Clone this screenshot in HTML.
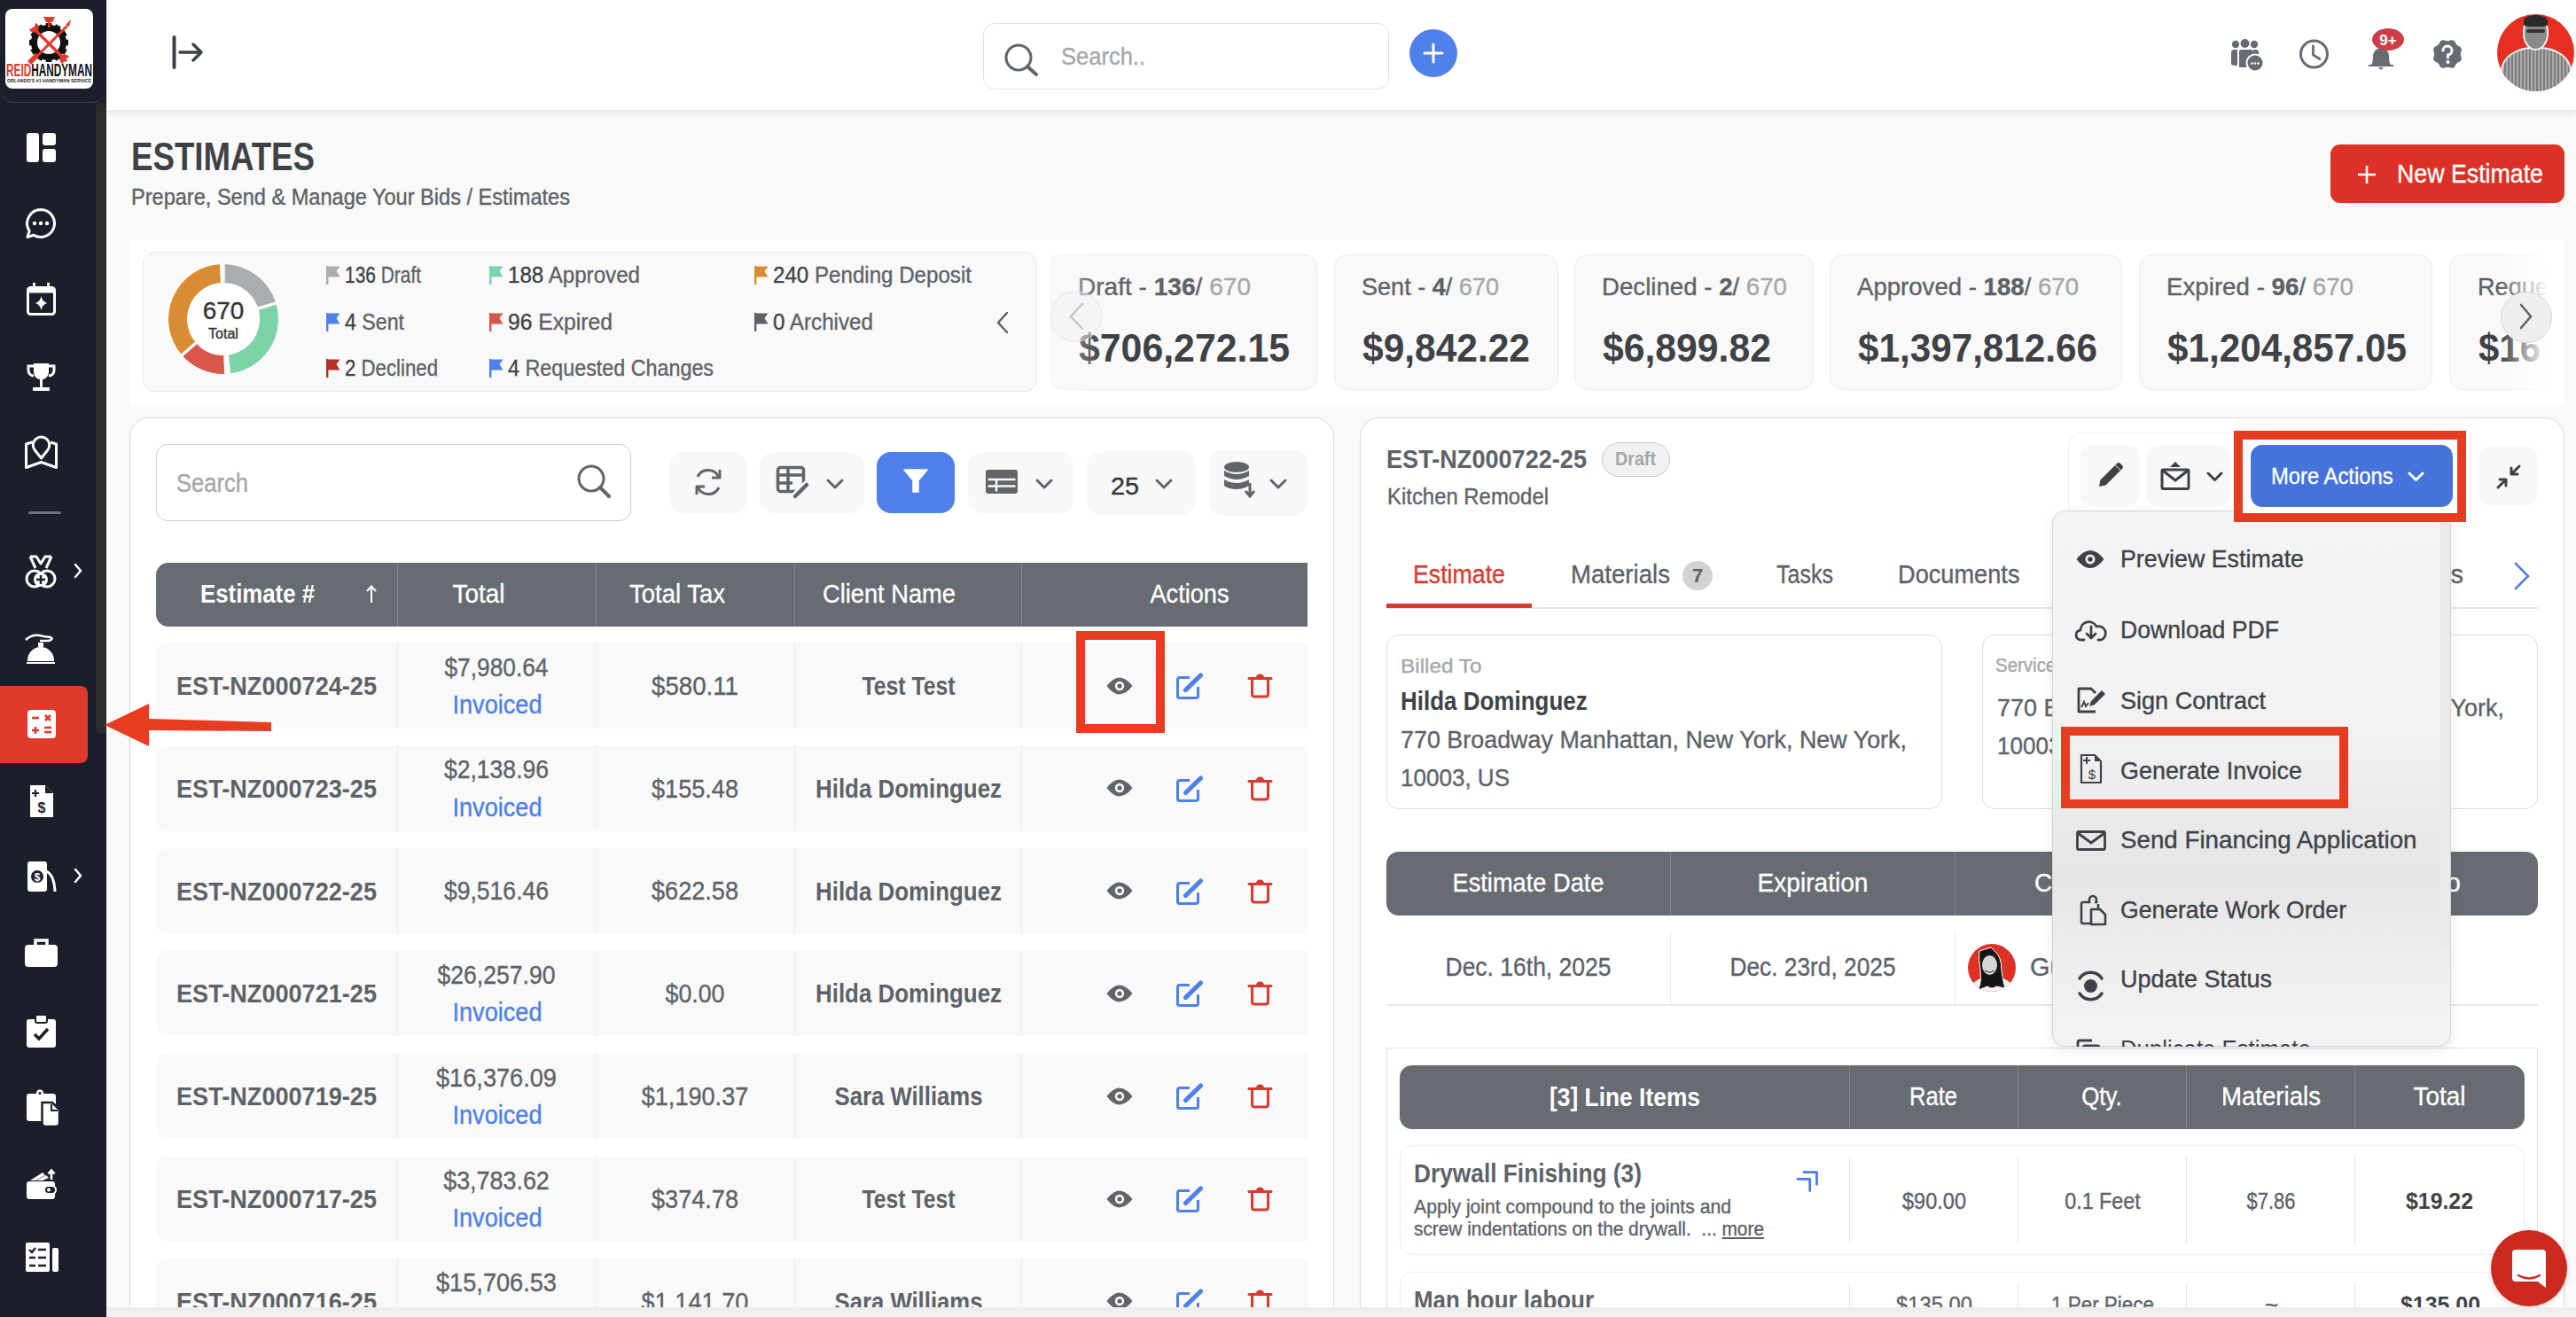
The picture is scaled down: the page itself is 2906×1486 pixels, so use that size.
<!DOCTYPE html>
<html><head><meta charset="utf-8"><style>*{box-sizing:border-box;margin:0;padding:0}
html,body{width:2906px;height:1486px;overflow:hidden;background:#f9f9f9;font-family:"Liberation Sans",sans-serif;color:#4a4f55}
.a{position:absolute}
.t{position:absolute;white-space:pre;display:block}
svg{position:absolute;overflow:visible}
</style></head><body>
<div class="a" style="left:0px;top:0px;width:120px;height:1486px;background:#1b1f2b"></div>
<div class="a" style="left:0px;top:0px;width:120px;height:116px;border-bottom:1.5px solid #3b4048;border-radius:0 0 16px 16px"></div>
<div class="a" style="left:108px;top:116px;width:12px;height:712px;background:#2c2c2c;border-radius:6px"></div>
<div class="a" style="left:6px;top:10px;width:99px;height:90px;background:#fff;border-radius:8px"></div>
<svg class="a" style="left:6px;top:10px;" width="99" height="90" viewBox="0 0 99 90"><text x="1" y="75.6" font-size="19.5" font-weight="bold" textLength="97" lengthAdjust="spacingAndGlyphs" font-family="Liberation Sans"><tspan fill="#e03a2c">REID</tspan><tspan fill="#111">HANDYMAN</tspan></text><text x="2" y="82.5" font-size="6" font-weight="bold" textLength="95" lengthAdjust="spacingAndGlyphs" fill="#222" font-family="Liberation Sans">ORLANDO'S #1 HANDYMAN SERVICE</text><g transform="translate(49,38)"><circle r="16.5" fill="none" stroke="#111" stroke-width="7"/><g fill="#111"><rect x="-3.3" y="-22" width="6.6" height="8" transform="rotate(0)"/><rect x="-3.3" y="-22" width="6.6" height="8" transform="rotate(30)"/><rect x="-3.3" y="-22" width="6.6" height="8" transform="rotate(60)"/><rect x="-3.3" y="-22" width="6.6" height="8" transform="rotate(90)"/><rect x="-3.3" y="-22" width="6.6" height="8" transform="rotate(120)"/><rect x="-3.3" y="-22" width="6.6" height="8" transform="rotate(150)"/><rect x="-3.3" y="-22" width="6.6" height="8" transform="rotate(180)"/><rect x="-3.3" y="-22" width="6.6" height="8" transform="rotate(210)"/><rect x="-3.3" y="-22" width="6.6" height="8" transform="rotate(240)"/><rect x="-3.3" y="-22" width="6.6" height="8" transform="rotate(270)"/><rect x="-3.3" y="-22" width="6.6" height="8" transform="rotate(300)"/><rect x="-3.3" y="-22" width="6.6" height="8" transform="rotate(330)"/></g><g stroke="#e03a2c" stroke-linecap="round"><line x1="-17" y1="-16" x2="19" y2="20" stroke-width="3.5"/><line x1="20" y1="-18" x2="-17" y2="19" stroke-width="3"/></g><path d="M-22 -15 A5.5 5.5 0 1 0 -15 -22 L-16.5 -16.5 Z" fill="#e03a2c"/><path d="M23 17 A5.5 5.5 0 1 0 16 24 L18 18 Z" fill="#e03a2c"/><path d="M-24 21 L-15 12 L-11 16 L-20 25 Z" fill="#e03a2c"/><path d="M19 -20 L25 -26 L23 -18 Z" fill="#e03a2c"/><path d="M-6 -29 H7 L4 -23 H-3 Z" fill="#e03a2c"/><rect x="-1" y="-24" width="2.5" height="7" fill="#e03a2c"/></g></svg>
<div class="a" style="left:0px;top:774px;width:99px;height:87px;background:#e03a2c;border-radius:0 8px 8px 0"></div>
<svg class="a" style="left:30px;top:150px;" width="33" height="33" viewBox="0 0 33 33"><rect x="0" y="0" width="14" height="33" rx="3" fill="#fff"/><rect x="18" y="0" width="15" height="14" rx="3" fill="#fff"/><rect x="18" y="18" width="15" height="15" rx="3" fill="#fff"/></svg>
<svg class="a" style="left:28px;top:234px;" width="36" height="36" viewBox="0 0 36 36"><path d="M18 2.5a15.5 15.5 0 1 1 -8 28.8 L3 33.5 L5.2 26.5 A15.5 15.5 0 0 1 18 2.5z" fill="none" stroke="#fff" stroke-width="3" stroke-linejoin="round"/><circle cx="11" cy="18" r="2.2" fill="#fff"/><circle cx="18" cy="18" r="2.2" fill="#fff"/><circle cx="25" cy="18" r="2.2" fill="#fff"/></svg>
<svg class="a" style="left:30px;top:319px;" width="33" height="37" viewBox="0 0 33 37"><rect x="1.5" y="5.5" width="30" height="30" rx="3" fill="none" stroke="#fff" stroke-width="3"/><rect x="1.5" y="5.5" width="30" height="6" fill="#fff"/><rect x="7" y="0" width="3" height="8" fill="#fff"/><rect x="23" y="0" width="3" height="8" fill="#fff"/><path d="M16.5 15 Q17.5 21 23 23 Q17.5 25 16.5 31 Q15.5 25 10 23 Q15.5 21 16.5 15z" fill="#fff"/></svg>
<svg class="a" style="left:30px;top:410px;" width="33" height="32" viewBox="0 0 33 32"><path d="M8 0 H25 V10 A8.5 8.5 0 0 1 8 10 Z" fill="#fff"/><path d="M8 3 H2 V8 A6 6 0 0 0 8 14" fill="none" stroke="#fff" stroke-width="3"/><path d="M25 3 H31 V8 A6 6 0 0 1 25 14" fill="none" stroke="#fff" stroke-width="3"/><rect x="15" y="18" width="3" height="9" fill="#fff"/><rect x="7" y="27" width="19" height="4" rx="1" fill="#fff"/></svg>
<svg class="a" style="left:28px;top:490px;" width="37" height="39" viewBox="0 0 37 39"><path d="M1.5 11 V37.5 L18.5 31.5 L35.5 37.5 V11 L29 9" fill="none" stroke="#fff" stroke-width="3" stroke-linejoin="round"/><path d="M1.5 11 L8 9" fill="none" stroke="#fff" stroke-width="3" stroke-linecap="round"/><path d="M18.5 27 L11 17.5 A9.2 9.2 0 1 1 26 17.5 Z" fill="#1b1f2b" stroke="#fff" stroke-width="3" stroke-linejoin="round"/></svg>
<div class="a" style="left:32px;top:577px;width:37px;height:3px;background:#6b7384;border-radius:2px"></div>
<svg class="a" style="left:28px;top:627px;" width="36" height="38" viewBox="0 0 36 38"><path d="M6 1 L12 14 M30 1 L24 14 M6 1 H13 L18 9 L23 1 H30" fill="none" stroke="#fff" stroke-width="3" stroke-linejoin="round"/><circle cx="11" cy="26" r="9" fill="none" stroke="#fff" stroke-width="3"/><circle cx="25" cy="26" r="9" fill="none" stroke="#fff" stroke-width="3"/><circle cx="18" cy="27" r="8" fill="#fff"/><path d="M18 22 V32 M13 27 H23" stroke="#1b1f2b" stroke-width="2.5"/></svg>
<svg class="a" style="left:83px;top:635px;" width="10" height="18" viewBox="0 0 10 18"><path d="M2 2 L8 9 L2 16" fill="none" stroke="#fff" stroke-width="2.5" stroke-linecap="round"/></svg>
<svg class="a" style="left:27px;top:712px;" width="38" height="38" viewBox="0 0 38 38"><path d="M3 36 H35 M5 33 H33 A14 14 0 0 0 5 33 Z" fill="#fff" stroke="#fff" stroke-width="2"/><rect x="16" y="13" width="6" height="5" fill="#fff"/><path d="M2 10 Q10 2 22 6 L30 7 Q34 9 28 11 L18 11" fill="none" stroke="#fff" stroke-width="2.5"/></svg>
<svg class="a" style="left:31px;top:801px;" width="32" height="32" viewBox="0 0 32 32"><rect x="0" y="0" width="32" height="32" rx="4" fill="#fff"/><path d="M5 9 H13 M9 19 V27 M5 23 H13 M19 20 H27 M19 25 H27 M20 6 L26 12 M26 6 L20 12" stroke="#e03a2c" stroke-width="2.6"/></svg>
<svg class="a" style="left:32px;top:884px;" width="30" height="40" viewBox="0 0 30 40"><path d="M2 2 H19 L28 11 V38 H2 Z" fill="#fff"/><path d="M19 2 V11 H28" fill="#1b1f2b"/><path d="M8 7 V15 M4 11 H12" stroke="#1b1f2b" stroke-width="2.2"/><text x="15" y="33" font-size="16" font-weight="bold" text-anchor="middle" fill="#1b1f2b" font-family="Liberation Sans">$</text></svg>
<svg class="a" style="left:29px;top:970px;" width="36" height="38" viewBox="0 0 36 38"><rect x="2" y="2" width="22" height="34" rx="3" fill="#fff"/><circle cx="13" cy="19" r="7" fill="#1b1f2b"/><text x="13" y="24" font-size="12" font-weight="bold" text-anchor="middle" fill="#fff" font-family="Liberation Sans">$</text><path d="M20 12 Q32 14 33 36" fill="none" stroke="#fff" stroke-width="3"/></svg>
<svg class="a" style="left:83px;top:979px;" width="10" height="18" viewBox="0 0 10 18"><path d="M2 2 L8 9 L2 16" fill="none" stroke="#fff" stroke-width="2.5" stroke-linecap="round"/></svg>
<svg class="a" style="left:28px;top:1058px;" width="37" height="33" viewBox="0 0 37 33"><path d="M12 8 V3 H25 V8" fill="none" stroke="#fff" stroke-width="3.5"/><rect x="0" y="8" width="37" height="25" rx="4" fill="#fff"/></svg>
<svg class="a" style="left:30px;top:1145px;" width="33" height="37" viewBox="0 0 33 37"><rect x="0" y="5" width="33" height="32" rx="3" fill="#fff"/><rect x="10" y="0" width="13" height="9" rx="2" fill="#fff" stroke="#1b1f2b" stroke-width="2"/><path d="M9 22 L14 27 L24 16" fill="none" stroke="#1b1f2b" stroke-width="3.5"/></svg>
<svg class="a" style="left:29px;top:1229px;" width="38" height="42" viewBox="0 0 38 42"><rect x="1" y="5" width="33" height="31" rx="3" fill="#fff"/><circle cx="16" cy="4.5" r="4" fill="#fff"/><circle cx="16" cy="4.5" r="1.5" fill="#1b1f2b"/><path d="M18.5 15 H30 L38 23 V38 Q38 42 34 42 H22.5 Q18.5 42 18.5 38 Z" fill="#fff" stroke="#1b1f2b" stroke-width="2.5"/><path d="M29 17 V24 H36" fill="none" stroke="#1b1f2b" stroke-width="2"/></svg>
<svg class="a" style="left:29px;top:1318px;" width="36" height="36" viewBox="0 0 36 36"><path d="M5 14 L19 5 L22 8 L11 14 Z" fill="#fff"/><path d="M12 14 L23 8 L26 11 L19 14 Z" fill="#fff"/><path d="M29 13 V3 M25.5 6.5 L29 2.5 L32.5 6.5" fill="none" stroke="#fff" stroke-width="2.6"/><rect x="1" y="15" width="32" height="20" rx="3" fill="#fff"/><rect x="21" y="20" width="13" height="9" rx="4.5" fill="#1b1f2b" stroke="#fff" stroke-width="2"/><circle cx="26" cy="24.5" r="2" fill="#fff"/></svg>
<svg class="a" style="left:29px;top:1402px;" width="37" height="33" viewBox="0 0 37 33"><rect x="0" y="0" width="27" height="33" rx="2" fill="#fff"/><rect x="30" y="6" width="7" height="27" rx="2" fill="#fff"/><path d="M4 8 L7 11 L11 6 M14 8 H23 M4 17 H11 M14 17 H23 M4 26 H11 M14 26 H23" stroke="#1b1f2b" stroke-width="2.4" fill="none"/></svg>
<div class="a" style="left:120px;top:0px;width:2786px;height:124px;background:#fff;box-shadow:0 3px 8px rgba(0,0,0,.10)"></div>
<svg class="a" style="left:194px;top:40px;" width="38" height="38" viewBox="0 0 38 38"><path d="M2.5 2 V36" stroke="#3d4248" stroke-width="4" stroke-linecap="round"/><path d="M9 19 H33 M24 10 L33 19 L24 28" fill="none" stroke="#3d4248" stroke-width="3.5" stroke-linecap="round" stroke-linejoin="round"/></svg>
<div class="a" style="left:1109px;top:26px;width:458px;height:75px;border:1.5px solid #dfe0e2;border-radius:13px;background:#fff"></div>
<svg class="a" style="left:1133px;top:49px;" width="40" height="40" viewBox="0 0 40 40"><circle cx="16" cy="16" r="14" fill="none" stroke="#60656b" stroke-width="3"/><path d="M26 26 L36 35" stroke="#60656b" stroke-width="4" stroke-linecap="round"/></svg>
<span id="t0" class="t" style="left:1197px;top:50.0px;font-size:28px;line-height:28px;-webkit-text-stroke:0.35px currentColor;color:#a3a7ab;transform:scaleX(0.9110);transform-origin:0 0;">Search..</span>
<div class="a" style="left:1590px;top:33px;width:54px;height:54px;background:#4e82ea;border-radius:50%"></div>
<svg class="a" style="left:1606px;top:49px;" width="22" height="22" viewBox="0 0 22 22"><path d="M11 1 V21 M1 11 H21" stroke="#fff" stroke-width="3" stroke-linecap="round"/></svg>
<svg class="a" style="left:2517px;top:44px;" width="37" height="36" viewBox="0 0 37 36"><circle cx="5" cy="6" r="4.2" fill="#676b73"/><circle cx="15.5" cy="5" r="5" fill="#676b73"/><circle cx="26" cy="6" r="4.2" fill="#676b73"/><path d="M0 28 V15 Q0 12 4 12 H7 V30 Q0 30 0 28z" fill="#676b73"/><path d="M9 14 Q9 12 12 12 H22 Q25 12 25 15 V32 H9z" fill="#676b73"/><path d="M25 12 H28 Q31 12 31 15 V20 H25z" fill="#676b73"/><circle cx="27" cy="27" r="9.5" fill="#676b73" stroke="#fff" stroke-width="2"/><circle cx="23.5" cy="27.5" r="1.3" fill="#fff"/><circle cx="27" cy="27.5" r="1.3" fill="#fff"/><circle cx="30.5" cy="27.5" r="1.3" fill="#fff"/></svg>
<svg class="a" style="left:2594px;top:44px;" width="33" height="34" viewBox="0 0 33 34"><circle cx="16.5" cy="17" r="15" fill="none" stroke="#676b73" stroke-width="3"/><path d="M15.5 8 V18 L23 22.5" fill="none" stroke="#676b73" stroke-width="2.8" stroke-linecap="round"/></svg>
<svg class="a" style="left:2671px;top:49px;" width="30" height="31" viewBox="0 0 30 31"><path d="M4 24 Q6 22 6 14 A9 9 0 0 1 24 14 Q24 22 26 24 H29 V26 H1 V24 Z" fill="#676b73"/><path d="M12 27 H18 L15 30 Z" fill="#676b73"/></svg>
<div class="a" style="left:2676px;top:32px;width:36px;height:25px;background:#cc3d46;border-radius:50%"></div>
<span id="t1" class="t" style="left:2694px;top:37.1px;font-size:17px;line-height:17px;font-weight:bold;color:#fff;transform:translateX(-50%) ;transform-origin:50% 0;">9+</span>
<svg class="a" style="left:2743px;top:43px;" width="36" height="36" viewBox="0 0 36 36"><circle cx="18" cy="18" r="15" fill="#676b73"/><circle cx="29.27" cy="22.67" r="4.6" fill="#676b73"/><circle cx="22.67" cy="29.27" r="4.6" fill="#676b73"/><circle cx="13.33" cy="29.27" r="4.6" fill="#676b73"/><circle cx="6.73" cy="22.67" r="4.6" fill="#676b73"/><circle cx="6.73" cy="13.33" r="4.6" fill="#676b73"/><circle cx="13.33" cy="6.73" r="4.6" fill="#676b73"/><circle cx="22.67" cy="6.73" r="4.6" fill="#676b73"/><circle cx="29.27" cy="13.33" r="4.6" fill="#676b73"/><path d="M13 14 A5 5 0 1 1 18.5 19 V22" fill="none" stroke="#fff" stroke-width="3" stroke-linecap="round"/><circle cx="18.5" cy="27" r="2" fill="#fff"/></svg>
<div class="a" style="left:2817px;top:16px;width:87px;height:87px;border-radius:50%;background:#e52f22;overflow:hidden"><div class="a" style="left:4px;top:37px;width:80px;height:60px;border-radius:45% 45% 0 0;background:repeating-linear-gradient(90deg,#aaa 0 2px,#7d7d7d 2px 4px);border:2px solid #f0f0f0"></div><div class="a" style="left:29px;top:3px;width:29px;height:38px;border-radius:45% 45% 50% 50%;background:#8a8a8a;border:2px solid #f0f0f0"></div><div class="a" style="left:30px;top:1px;width:27px;height:13px;border-radius:50% 50% 20% 20%;background:#2a2a2a"></div><div class="a" style="left:33px;top:17px;width:21px;height:4px;background:#333;border-radius:2px"></div></div>
<span id="t2" class="t" style="left:148px;top:154.7px;font-size:44px;line-height:44px;font-weight:bold;color:#3e4246;transform:scaleX(0.8329);transform-origin:0 0;">ESTIMATES</span>
<span id="t3" class="t" style="left:148px;top:209.6px;font-size:25.5px;line-height:25.5px;-webkit-text-stroke:0.35px currentColor;color:#5c6166;transform:scaleX(0.9238);transform-origin:0 0;">Prepare, Send &amp; Manage Your Bids / Estimates</span>
<div class="a" style="left:2629px;top:163px;width:264px;height:66px;background:#dc3127;border-radius:11px"></div>
<svg class="a" style="left:2659px;top:186px;" width="22" height="22" viewBox="0 0 22 22"><path d="M11 1 V21 M1 11 H21" stroke="#fff" stroke-width="2.6"/></svg>
<span id="t4" class="t" style="left:2704px;top:181.0px;font-size:30px;line-height:30px;-webkit-text-stroke:0.35px currentColor;color:#fff;transform:scaleX(0.8916);transform-origin:0 0;">New Estimate</span>
<div class="a" style="left:146px;top:270px;width:2747px;height:187px;background:#fff"></div>
<div class="a" style="left:161px;top:284px;width:1009px;height:158px;background:#f9f9f9;border:1px solid #ebebeb;border-radius:13px"></div>
<svg class="a" style="left:182px;top:290px;" width="140" height="140" viewBox="0 0 140 140"><circle cx="70" cy="70" r="63" fill="#fff"/><path d="M70.00 8.00 A62 62 0 0 1 129.31 51.95 L109.22 58.06 A41 41 0 0 0 70.00 29.00 Z" fill="#a9acb0"/><path d="M129.31 51.95 A62 62 0 0 1 76.38 131.67 L74.22 110.78 A41 41 0 0 0 109.22 58.06 Z" fill="#7dd3a8"/><path d="M76.38 131.67 A62 62 0 0 1 74.07 131.87 L72.69 110.91 A41 41 0 0 0 74.22 110.78 Z" fill="#4d82ea"/><path d="M74.07 131.87 A62 62 0 0 1 72.91 131.93 L71.92 110.95 A41 41 0 0 0 72.69 110.91 Z" fill="#b5302a"/><path d="M72.91 131.93 A62 62 0 0 1 23.28 110.76 L39.11 96.95 A41 41 0 0 0 71.92 110.95 Z" fill="#d9574a"/><path d="M23.28 110.76 A62 62 0 0 1 67.67 8.04 L68.46 29.03 A41 41 0 0 0 39.11 96.95 Z" fill="#da8c34"/><path d="M67.67 8.04 A62 62 0 0 1 70.00 8.00 L70.00 29.00 A41 41 0 0 0 68.46 29.03 Z" fill="#4d82ea"/><line x1="70.00" y1="32.00" x2="70.00" y2="5.00" stroke="#f9f9f9" stroke-width="3.5"/><line x1="106.35" y1="58.94" x2="132.18" y2="51.08" stroke="#f9f9f9" stroke-width="3.5"/><line x1="73.91" y1="107.80" x2="76.69" y2="134.65" stroke="#f9f9f9" stroke-width="3.5"/><line x1="72.49" y1="107.92" x2="74.26" y2="134.86" stroke="#f9f9f9" stroke-width="3.5"/><line x1="71.78" y1="107.96" x2="73.05" y2="134.93" stroke="#f9f9f9" stroke-width="3.5"/><line x1="41.37" y1="94.98" x2="21.02" y2="112.73" stroke="#f9f9f9" stroke-width="3.5"/><line x1="68.57" y1="32.03" x2="67.56" y2="5.05" stroke="#f9f9f9" stroke-width="3.5"/></svg>
<span id="t5" class="t" style="left:252px;top:337.3px;font-size:28px;line-height:28px;-webkit-text-stroke:0.35px currentColor;color:#333;transform:translateX(-50%) scaleX(0.9953);transform-origin:50% 0;">670</span>
<span id="t6" class="t" style="left:252px;top:369.0px;font-size:16px;line-height:16px;-webkit-text-stroke:0.35px currentColor;color:#333;transform:translateX(-50%) ;transform-origin:50% 0;">Total</span>
<svg class="a" style="left:368px;top:300px;" width="16" height="21" viewBox="0 0 16 21"><rect x="0" y="0" width="2.4" height="21" fill="#a9acb0"/><path d="M2 0.5 H15.5 L11.5 6 L15.5 12.5 H2 Z" fill="#a9acb0"/></svg>
<span id="t7" class="t" style="left:389px;top:297.8px;font-size:25px;line-height:25px;-webkit-text-stroke:0.35px currentColor;color:#5d6268;transform:scaleX(0.8362);transform-origin:0 0;"><span style="color:#3e4246">136</span> Draft</span>
<svg class="a" style="left:368px;top:353px;" width="16" height="21" viewBox="0 0 16 21"><rect x="0" y="0" width="2.4" height="21" fill="#4d82ea"/><path d="M2 0.5 H15.5 L11.5 6 L15.5 12.5 H2 Z" fill="#4d82ea"/></svg>
<span id="t8" class="t" style="left:389px;top:350.8px;font-size:25px;line-height:25px;-webkit-text-stroke:0.35px currentColor;color:#5d6268;transform:scaleX(0.9269);transform-origin:0 0;"><span style="color:#3e4246">4</span> Sent</span>
<svg class="a" style="left:368px;top:405px;" width="16" height="21" viewBox="0 0 16 21"><rect x="0" y="0" width="2.4" height="21" fill="#b5302a"/><path d="M2 0.5 H15.5 L11.5 6 L15.5 12.5 H2 Z" fill="#b5302a"/></svg>
<span id="t9" class="t" style="left:389px;top:402.8px;font-size:25px;line-height:25px;-webkit-text-stroke:0.35px currentColor;color:#5d6268;transform:scaleX(0.8888);transform-origin:0 0;"><span style="color:#3e4246">2</span> Declined</span>
<svg class="a" style="left:552px;top:300px;" width="16" height="21" viewBox="0 0 16 21"><rect x="0" y="0" width="2.4" height="21" fill="#7dd3a8"/><path d="M2 0.5 H15.5 L11.5 6 L15.5 12.5 H2 Z" fill="#7dd3a8"/></svg>
<span id="t10" class="t" style="left:573px;top:297.8px;font-size:25px;line-height:25px;-webkit-text-stroke:0.35px currentColor;color:#5d6268;transform:scaleX(0.9656);transform-origin:0 0;"><span style="color:#3e4246">188</span> Approved</span>
<svg class="a" style="left:552px;top:353px;" width="16" height="21" viewBox="0 0 16 21"><rect x="0" y="0" width="2.4" height="21" fill="#d9574a"/><path d="M2 0.5 H15.5 L11.5 6 L15.5 12.5 H2 Z" fill="#d9574a"/></svg>
<span id="t11" class="t" style="left:573px;top:350.8px;font-size:25px;line-height:25px;-webkit-text-stroke:0.35px currentColor;color:#5d6268;transform:scaleX(0.9872);transform-origin:0 0;"><span style="color:#3e4246">96</span> Expired</span>
<svg class="a" style="left:552px;top:405px;" width="16" height="21" viewBox="0 0 16 21"><rect x="0" y="0" width="2.4" height="21" fill="#4d82ea"/><path d="M2 0.5 H15.5 L11.5 6 L15.5 12.5 H2 Z" fill="#4d82ea"/></svg>
<span id="t12" class="t" style="left:573px;top:402.8px;font-size:25px;line-height:25px;-webkit-text-stroke:0.35px currentColor;color:#5d6268;transform:scaleX(0.9325);transform-origin:0 0;"><span style="color:#3e4246">4</span> Requested Changes</span>
<svg class="a" style="left:851px;top:300px;" width="16" height="21" viewBox="0 0 16 21"><rect x="0" y="0" width="2.4" height="21" fill="#da8c34"/><path d="M2 0.5 H15.5 L11.5 6 L15.5 12.5 H2 Z" fill="#da8c34"/></svg>
<span id="t13" class="t" style="left:872px;top:297.8px;font-size:25px;line-height:25px;-webkit-text-stroke:0.35px currentColor;color:#5d6268;transform:scaleX(0.9650);transform-origin:0 0;"><span style="color:#3e4246">240</span> Pending Deposit</span>
<svg class="a" style="left:851px;top:353px;" width="16" height="21" viewBox="0 0 16 21"><rect x="0" y="0" width="2.4" height="21" fill="#5d6268"/><path d="M2 0.5 H15.5 L11.5 6 L15.5 12.5 H2 Z" fill="#5d6268"/></svg>
<span id="t14" class="t" style="left:872px;top:350.8px;font-size:25px;line-height:25px;-webkit-text-stroke:0.35px currentColor;color:#5d6268;transform:scaleX(0.9679);transform-origin:0 0;"><span style="color:#3e4246">0</span> Archived</span>
<svg class="a" style="left:1123px;top:351px;" width="16" height="26" viewBox="0 0 16 26"><path d="M13 2 L3 13 L13 24" fill="none" stroke="#5d6268" stroke-width="2.5" stroke-linecap="round" stroke-linejoin="round"/></svg>
<div class="a" style="left:1185px;top:287px;width:301px;height:153px;background:#f9f9f9;border:1px solid #ececec;border-radius:15px"></div>
<span id="t15" class="t" style="left:1216px;top:310.3px;font-size:28px;line-height:28px;-webkit-text-stroke:0.35px currentColor;color:#5d6268;transform:scaleX(1.0022);transform-origin:0 0;">Draft - <b style="color:#5d6268">136</b>/ <span style="color:#a3a7ab">670</span></span>
<span id="t16" class="t" style="left:1217px;top:370.7px;font-size:44px;line-height:44px;font-weight:bold;color:#3e4246;transform:scaleX(0.9727);transform-origin:0 0;">$706,272.15</span>
<div class="a" style="left:1505px;top:287px;width:253px;height:153px;background:#f9f9f9;border:1px solid #ececec;border-radius:15px"></div>
<span id="t17" class="t" style="left:1536px;top:310.3px;font-size:28px;line-height:28px;-webkit-text-stroke:0.35px currentColor;color:#5d6268;transform:scaleX(0.9667);transform-origin:0 0;">Sent - <b style="color:#5d6268">4</b>/ <span style="color:#a3a7ab">670</span></span>
<span id="t18" class="t" style="left:1537px;top:370.7px;font-size:44px;line-height:44px;font-weight:bold;color:#3e4246;transform:scaleX(0.9655);transform-origin:0 0;">$9,842.22</span>
<div class="a" style="left:1776px;top:287px;width:270px;height:153px;background:#f9f9f9;border:1px solid #ececec;border-radius:15px"></div>
<span id="t19" class="t" style="left:1807px;top:310.3px;font-size:28px;line-height:28px;-webkit-text-stroke:0.35px currentColor;color:#5d6268;transform:scaleX(0.9872);transform-origin:0 0;">Declined - <b style="color:#5d6268">2</b>/ <span style="color:#a3a7ab">670</span></span>
<span id="t20" class="t" style="left:1808px;top:370.7px;font-size:44px;line-height:44px;font-weight:bold;color:#3e4246;transform:scaleX(0.9706);transform-origin:0 0;">$6,899.82</span>
<div class="a" style="left:2064px;top:287px;width:330px;height:153px;background:#f9f9f9;border:1px solid #ececec;border-radius:15px"></div>
<span id="t21" class="t" style="left:2095px;top:310.3px;font-size:28px;line-height:28px;-webkit-text-stroke:0.35px currentColor;color:#5d6268;transform:scaleX(0.9852);transform-origin:0 0;">Approved - <b style="color:#5d6268">188</b>/ <span style="color:#a3a7ab">670</span></span>
<span id="t22" class="t" style="left:2096px;top:370.7px;font-size:44px;line-height:44px;font-weight:bold;color:#3e4246;transform:scaleX(0.9595);transform-origin:0 0;">$1,397,812.66</span>
<div class="a" style="left:2413px;top:287px;width:331px;height:153px;background:#f9f9f9;border:1px solid #ececec;border-radius:15px"></div>
<span id="t23" class="t" style="left:2444px;top:310.3px;font-size:28px;line-height:28px;-webkit-text-stroke:0.35px currentColor;color:#5d6268;transform:scaleX(0.9894);transform-origin:0 0;">Expired - <b style="color:#5d6268">96</b>/ <span style="color:#a3a7ab">670</span></span>
<span id="t24" class="t" style="left:2445px;top:370.7px;font-size:44px;line-height:44px;font-weight:bold;color:#3e4246;transform:scaleX(0.9595);transform-origin:0 0;">$1,204,857.05</span>
<div class="a" style="left:2763px;top:287px;width:130px;height:153px;background:#f9f9f9;border:1px solid #ececec;border-right:none;border-radius:15px 0 0 15px"></div>
<span id="t25" class="t" style="left:2795px;top:310.3px;font-size:28px;line-height:28px;-webkit-text-stroke:0.35px currentColor;color:#5d6268;transform:scaleX(0.9695);transform-origin:0 0;">Reque</span>
<span id="t26" class="t" style="left:2796px;top:370.7px;font-size:44px;line-height:44px;font-weight:bold;color:#3e4246;transform:scaleX(0.9534);transform-origin:0 0;">$16</span>
<div class="a" style="left:2820px;top:280px;width:73px;height:170px;background:linear-gradient(90deg,rgba(255,255,255,0),#fff 75%)"></div>
<div class="a" style="left:1185px;top:287px;width:60px;height:153px;background:linear-gradient(90deg,rgba(249,249,249,.6),rgba(249,249,249,0))"></div>
<div class="a" style="left:1185px;top:328px;width:58px;height:58px;background:rgba(240,240,240,.45);border:1px solid rgba(220,220,220,.5);border-radius:50%"></div>
<svg class="a" style="left:1205px;top:341px;" width="20" height="32" viewBox="0 0 20 32"><path d="M16 2 L3 16 L16 30" fill="none" stroke="#c4c6c9" stroke-width="2.5" stroke-linecap="round"/></svg>
<div class="a" style="left:2821px;top:329px;width:58px;height:58px;background:#efefef;border:1px solid #d6d6d6;border-radius:50%"></div>
<svg class="a" style="left:2842px;top:342px;" width="16" height="30" viewBox="0 0 16 30"><path d="M2 2 L13 15 L2 28" fill="none" stroke="#60656b" stroke-width="2.6" stroke-linecap="round"/></svg>
<div class="a" style="left:146px;top:471px;width:1359px;height:1100px;background:#fff;border:1.5px solid #dadada;border-radius:22px"></div>
<div class="a" style="left:176px;top:501px;width:536px;height:87px;background:#fff;border:1.5px solid #c9cbce;border-radius:13px"></div>
<span id="t27" class="t" style="left:199px;top:530.9px;font-size:29px;line-height:29px;-webkit-text-stroke:0.35px currentColor;color:#a3a7ab;transform:scaleX(0.8815);transform-origin:0 0;">Search</span>
<svg class="a" style="left:651px;top:524px;" width="40" height="40" viewBox="0 0 40 40"><circle cx="16" cy="16" r="14" fill="none" stroke="#60656b" stroke-width="3"/><path d="M26 26 L36 36" stroke="#60656b" stroke-width="4" stroke-linecap="round"/></svg>
<div class="a" style="left:755px;top:510px;width:88px;height:69px;background:#f8f8f8;border-radius:16px"></div>
<div class="a" style="left:857px;top:510px;width:118px;height:69px;background:#f8f8f8;border-radius:16px"></div>
<div class="a" style="left:989px;top:510px;width:88px;height:69px;background:#4e80ea;border-radius:16px"></div>
<div class="a" style="left:1092px;top:510px;width:119px;height:69px;background:#f8f8f8;border-radius:16px"></div>
<div class="a" style="left:1226px;top:509px;width:123px;height:72px;background:#f8f8f8;border-radius:16px"></div>
<div class="a" style="left:1364px;top:507px;width:111px;height:75px;background:#f8f8f8;border-radius:16px"></div>
<svg class="a" style="left:782px;top:527px;" width="34" height="34" viewBox="0 0 34 34"><path d="M29 12 A13 13 0 0 0 5 11" fill="none" stroke="#60656b" stroke-width="3"/><path d="M30 3 V12 H21" fill="none" stroke="#60656b" stroke-width="3" stroke-linejoin="round"/><path d="M5 22 A13 13 0 0 0 29 23" fill="none" stroke="#60656b" stroke-width="3"/><path d="M4 31 V22 H13" fill="none" stroke="#60656b" stroke-width="3" stroke-linejoin="round"/></svg>
<svg class="a" style="left:876px;top:526px;" width="38" height="36" viewBox="0 0 38 36"><rect x="1.5" y="1.5" width="29" height="27" rx="3" fill="none" stroke="#60656b" stroke-width="3.5"/><path d="M1.5 10 H30 M1.5 19 H18 M13 1.5 V28" stroke="#60656b" stroke-width="3.5"/><path d="M20 34 L35 19" stroke="#fff" stroke-width="8"/><path d="M21 34 L34 21" stroke="#60656b" stroke-width="4.5" stroke-linecap="round"/></svg>
<svg class="a" style="left:932px;top:540px;" width="20" height="12" viewBox="0 0 20 12"><path d="M2 2 L10 10 L18 2" fill="none" stroke="#60656b" stroke-width="3" stroke-linecap="round" stroke-linejoin="round"/></svg>
<svg class="a" style="left:1020px;top:530px;" width="26" height="26" viewBox="0 0 26 26"><path d="M0 0 H26 L16 12 V25 H10 V12 Z" fill="#fff" stroke="#fff" stroke-linejoin="round" stroke-width="1.5"/></svg>
<svg class="a" style="left:1112px;top:530px;" width="36" height="27" viewBox="0 0 36 27"><rect x="0" y="0" width="36" height="27" rx="3" fill="#60656b"/><path d="M2.5 11 H33.5 M2.5 18.5 H33.5 M12 11 V24.5" stroke="#f8f8f8" stroke-width="2.5"/></svg>
<svg class="a" style="left:1168px;top:540px;" width="20" height="12" viewBox="0 0 20 12"><path d="M2 2 L10 10 L18 2" fill="none" stroke="#60656b" stroke-width="3" stroke-linecap="round" stroke-linejoin="round"/></svg>
<span id="t28" class="t" style="left:1253px;top:535.3px;font-size:28px;line-height:28px;-webkit-text-stroke:0.35px currentColor;color:#333;transform:scaleX(1.0271);transform-origin:0 0;">25</span>
<svg class="a" style="left:1303px;top:540px;" width="20" height="12" viewBox="0 0 20 12"><path d="M2 2 L10 10 L18 2" fill="none" stroke="#60656b" stroke-width="3" stroke-linecap="round" stroke-linejoin="round"/></svg>
<svg class="a" style="left:1380px;top:521px;" width="36" height="42" viewBox="0 0 36 42"><ellipse cx="15" cy="6" rx="14" ry="6" fill="#60656b"/><path d="M1 10 Q15 18 29 10 V16 Q15 24 1 16 Z" fill="#60656b"/><path d="M1 20 Q15 28 29 20 V27 Q22 31 15 31 Q6 31 1 27 Z" fill="#60656b"/><path d="M30 24 V38 M25 33 L30 39 L35 33" fill="none" stroke="#60656b" stroke-width="3"/></svg>
<svg class="a" style="left:1432px;top:540px;" width="20" height="12" viewBox="0 0 20 12"><path d="M2 2 L10 10 L18 2" fill="none" stroke="#60656b" stroke-width="3" stroke-linecap="round" stroke-linejoin="round"/></svg>
<div class="a" style="left:176px;top:635px;width:1299px;height:72px;background:#676b72;border-radius:14px 0 0 14px"></div>
<div class="a" style="left:448px;top:635px;width:1px;height:72px;background:#82868c"></div>
<div class="a" style="left:672px;top:635px;width:1px;height:72px;background:#82868c"></div>
<div class="a" style="left:896px;top:635px;width:1px;height:72px;background:#82868c"></div>
<div class="a" style="left:1152px;top:635px;width:1px;height:72px;background:#82868c"></div>
<span id="t29" class="t" style="left:226px;top:656.4px;font-size:29px;line-height:29px;font-weight:bold;color:#fff;transform:scaleX(0.8892);transform-origin:0 0;">Estimate #</span>
<svg class="a" style="left:412px;top:660px;" width="14" height="21" viewBox="0 0 14 21"><path d="M7 20 V2 M2 7 L7 1.5 L12 7" fill="none" stroke="#fff" stroke-width="2"/></svg>
<span id="t30" class="t" style="left:539.5px;top:656.4px;font-size:29px;line-height:29px;-webkit-text-stroke:0.35px currentColor;color:#fff;transform:translateX(-50%) scaleX(0.9630);transform-origin:50% 0;">Total</span>
<span id="t31" class="t" style="left:763.5px;top:656.4px;font-size:29px;line-height:29px;-webkit-text-stroke:0.35px currentColor;color:#fff;transform:translateX(-50%) scaleX(0.9480);transform-origin:50% 0;">Total Tax</span>
<span id="t32" class="t" style="left:1003px;top:656.4px;font-size:29px;line-height:29px;-webkit-text-stroke:0.35px currentColor;color:#fff;transform:translateX(-50%) scaleX(0.9401);transform-origin:50% 0;">Client Name</span>
<span id="t33" class="t" style="left:1341.5px;top:656.4px;font-size:29px;line-height:29px;-webkit-text-stroke:0.35px currentColor;color:#fff;transform:translateX(-50%) scaleX(0.9358);transform-origin:50% 0;">Actions</span>
<div class="a" style="left:176px;top:725.0px;width:1299px;height:97px;background:#f9f9f9;border-radius:14px 0 0 14px"></div>
<div class="a" style="left:448px;top:725.0px;width:1px;height:97px;background:#ececec"></div>
<div class="a" style="left:672px;top:725.0px;width:1px;height:97px;background:#ececec"></div>
<div class="a" style="left:896px;top:725.0px;width:1px;height:97px;background:#ececec"></div>
<div class="a" style="left:1152px;top:725.0px;width:1px;height:97px;background:#ececec"></div>
<span id="t34" class="t" style="left:311.5px;top:759.0px;font-size:30px;line-height:30px;font-weight:bold;color:#5d6268;transform:translateX(-50%) scaleX(0.9035);transform-origin:50% 0;">EST-NZ000724-25</span>
<span id="t35" class="t" style="left:560px;top:738.6px;font-size:29px;line-height:29px;-webkit-text-stroke:0.35px currentColor;color:#5d6268;transform:translateX(-50%) scaleX(0.9069);transform-origin:50% 0;">$7,980.64</span>
<span id="t36" class="t" style="left:560.5px;top:780.9px;font-size:29px;line-height:29px;-webkit-text-stroke:0.35px currentColor;color:#4d7fe6;transform:translateX(-50%) scaleX(0.9350);transform-origin:50% 0;">Invoiced</span>
<span id="t37" class="t" style="left:784px;top:759.8px;font-size:29px;line-height:29px;-webkit-text-stroke:0.35px currentColor;color:#5d6268;transform:translateX(-50%) scaleX(0.9544);transform-origin:50% 0;">$580.11</span>
<span id="t38" class="t" style="left:1024.5px;top:759.0px;font-size:30px;line-height:30px;font-weight:bold;color:#5d6268;transform:translateX(-50%) scaleX(0.8250);transform-origin:50% 0;">Test Test</span>
<svg class="a" style="left:1248px;top:763.5px;" width="30" height="20" viewBox="0 0 30 20"><path d="M0.5 10 Q15 -9 29.5 10 Q15 29 0.5 10 Z" fill="#60656b"/><circle cx="15" cy="10" r="5.2" fill="#f9f9f9"/><circle cx="15" cy="10" r="2.6" fill="#60656b"/></svg>
<svg class="a" style="left:1327px;top:760.0px;" width="31" height="29" viewBox="0 0 31 29"><path d="M15 4.5 H4 Q1.5 4.5 1.5 7 V25.5 Q1.5 27.5 4 27.5 H22 Q24.5 27.5 24.5 25.5 V15" fill="none" stroke="#4e80ea" stroke-width="3"/><path d="M10.5 18.5 L27.5 2" stroke="#4e80ea" stroke-width="5.2" stroke-linecap="round"/><path d="M9 20.5 L11 15.5 L14 18.5 Z" fill="#4e80ea"/></svg>
<svg class="a" style="left:1408px;top:760.0px;" width="27" height="27" viewBox="0 0 27 27"><path d="M1 5.5 H26" stroke="#d93a2f" stroke-width="3" stroke-linecap="round"/><path d="M9 5 Q9 0.5 13.5 0.5 Q18 0.5 18 5" fill="#d93a2f"/><path d="M4.5 6 V23 Q4.5 26 7.5 26 H19.5 Q22.5 26 22.5 23 V6" fill="none" stroke="#d93a2f" stroke-width="3"/></svg>
<div class="a" style="left:176px;top:840.8px;width:1299px;height:97px;background:#f9f9f9;border-radius:14px 0 0 14px"></div>
<div class="a" style="left:448px;top:840.8px;width:1px;height:97px;background:#ececec"></div>
<div class="a" style="left:672px;top:840.8px;width:1px;height:97px;background:#ececec"></div>
<div class="a" style="left:896px;top:840.8px;width:1px;height:97px;background:#ececec"></div>
<div class="a" style="left:1152px;top:840.8px;width:1px;height:97px;background:#ececec"></div>
<span id="t39" class="t" style="left:311.5px;top:874.8px;font-size:30px;line-height:30px;font-weight:bold;color:#5d6268;transform:translateX(-50%) scaleX(0.9035);transform-origin:50% 0;">EST-NZ000723-25</span>
<span id="t40" class="t" style="left:560px;top:854.4px;font-size:29px;line-height:29px;-webkit-text-stroke:0.35px currentColor;color:#5d6268;transform:translateX(-50%) scaleX(0.9146);transform-origin:50% 0;">$2,138.96</span>
<span id="t41" class="t" style="left:560.5px;top:896.7px;font-size:29px;line-height:29px;-webkit-text-stroke:0.35px currentColor;color:#4d7fe6;transform:translateX(-50%) scaleX(0.9350);transform-origin:50% 0;">Invoiced</span>
<span id="t42" class="t" style="left:784px;top:875.6px;font-size:29px;line-height:29px;-webkit-text-stroke:0.35px currentColor;color:#5d6268;transform:translateX(-50%) scaleX(0.9349);transform-origin:50% 0;">$155.48</span>
<span id="t43" class="t" style="left:1024.5px;top:874.8px;font-size:30px;line-height:30px;font-weight:bold;color:#5d6268;transform:translateX(-50%) scaleX(0.8630);transform-origin:50% 0;">Hilda Dominguez</span>
<svg class="a" style="left:1248px;top:879.3px;" width="30" height="20" viewBox="0 0 30 20"><path d="M0.5 10 Q15 -9 29.5 10 Q15 29 0.5 10 Z" fill="#60656b"/><circle cx="15" cy="10" r="5.2" fill="#f9f9f9"/><circle cx="15" cy="10" r="2.6" fill="#60656b"/></svg>
<svg class="a" style="left:1327px;top:875.8px;" width="31" height="29" viewBox="0 0 31 29"><path d="M15 4.5 H4 Q1.5 4.5 1.5 7 V25.5 Q1.5 27.5 4 27.5 H22 Q24.5 27.5 24.5 25.5 V15" fill="none" stroke="#4e80ea" stroke-width="3"/><path d="M10.5 18.5 L27.5 2" stroke="#4e80ea" stroke-width="5.2" stroke-linecap="round"/><path d="M9 20.5 L11 15.5 L14 18.5 Z" fill="#4e80ea"/></svg>
<svg class="a" style="left:1408px;top:875.8px;" width="27" height="27" viewBox="0 0 27 27"><path d="M1 5.5 H26" stroke="#d93a2f" stroke-width="3" stroke-linecap="round"/><path d="M9 5 Q9 0.5 13.5 0.5 Q18 0.5 18 5" fill="#d93a2f"/><path d="M4.5 6 V23 Q4.5 26 7.5 26 H19.5 Q22.5 26 22.5 23 V6" fill="none" stroke="#d93a2f" stroke-width="3"/></svg>
<div class="a" style="left:176px;top:956.6px;width:1299px;height:97px;background:#f9f9f9;border-radius:14px 0 0 14px"></div>
<div class="a" style="left:448px;top:956.6px;width:1px;height:97px;background:#ececec"></div>
<div class="a" style="left:672px;top:956.6px;width:1px;height:97px;background:#ececec"></div>
<div class="a" style="left:896px;top:956.6px;width:1px;height:97px;background:#ececec"></div>
<div class="a" style="left:1152px;top:956.6px;width:1px;height:97px;background:#ececec"></div>
<span id="t44" class="t" style="left:311.5px;top:990.6px;font-size:30px;line-height:30px;font-weight:bold;color:#5d6268;transform:translateX(-50%) scaleX(0.9035);transform-origin:50% 0;">EST-NZ000722-25</span>
<span id="t45" class="t" style="left:560px;top:991.4px;font-size:29px;line-height:29px;-webkit-text-stroke:0.35px currentColor;color:#5d6268;transform:translateX(-50%) scaleX(0.9146);transform-origin:50% 0;">$9,516.46</span>
<span id="t46" class="t" style="left:784px;top:991.4px;font-size:29px;line-height:29px;-webkit-text-stroke:0.35px currentColor;color:#5d6268;transform:translateX(-50%) scaleX(0.9349);transform-origin:50% 0;">$622.58</span>
<span id="t47" class="t" style="left:1024.5px;top:990.6px;font-size:30px;line-height:30px;font-weight:bold;color:#5d6268;transform:translateX(-50%) scaleX(0.8630);transform-origin:50% 0;">Hilda Dominguez</span>
<svg class="a" style="left:1248px;top:995.1px;" width="30" height="20" viewBox="0 0 30 20"><path d="M0.5 10 Q15 -9 29.5 10 Q15 29 0.5 10 Z" fill="#60656b"/><circle cx="15" cy="10" r="5.2" fill="#f9f9f9"/><circle cx="15" cy="10" r="2.6" fill="#60656b"/></svg>
<svg class="a" style="left:1327px;top:991.6px;" width="31" height="29" viewBox="0 0 31 29"><path d="M15 4.5 H4 Q1.5 4.5 1.5 7 V25.5 Q1.5 27.5 4 27.5 H22 Q24.5 27.5 24.5 25.5 V15" fill="none" stroke="#4e80ea" stroke-width="3"/><path d="M10.5 18.5 L27.5 2" stroke="#4e80ea" stroke-width="5.2" stroke-linecap="round"/><path d="M9 20.5 L11 15.5 L14 18.5 Z" fill="#4e80ea"/></svg>
<svg class="a" style="left:1408px;top:991.6px;" width="27" height="27" viewBox="0 0 27 27"><path d="M1 5.5 H26" stroke="#d93a2f" stroke-width="3" stroke-linecap="round"/><path d="M9 5 Q9 0.5 13.5 0.5 Q18 0.5 18 5" fill="#d93a2f"/><path d="M4.5 6 V23 Q4.5 26 7.5 26 H19.5 Q22.5 26 22.5 23 V6" fill="none" stroke="#d93a2f" stroke-width="3"/></svg>
<div class="a" style="left:176px;top:1072.4px;width:1299px;height:97px;background:#f9f9f9;border-radius:14px 0 0 14px"></div>
<div class="a" style="left:448px;top:1072.4px;width:1px;height:97px;background:#ececec"></div>
<div class="a" style="left:672px;top:1072.4px;width:1px;height:97px;background:#ececec"></div>
<div class="a" style="left:896px;top:1072.4px;width:1px;height:97px;background:#ececec"></div>
<div class="a" style="left:1152px;top:1072.4px;width:1px;height:97px;background:#ececec"></div>
<span id="t48" class="t" style="left:311.5px;top:1106.4px;font-size:30px;line-height:30px;font-weight:bold;color:#5d6268;transform:translateX(-50%) scaleX(0.9035);transform-origin:50% 0;">EST-NZ000721-25</span>
<span id="t49" class="t" style="left:560px;top:1086.0px;font-size:29px;line-height:29px;-webkit-text-stroke:0.35px currentColor;color:#5d6268;transform:translateX(-50%) scaleX(0.9163);transform-origin:50% 0;">$26,257.90</span>
<span id="t50" class="t" style="left:560.5px;top:1128.3px;font-size:29px;line-height:29px;-webkit-text-stroke:0.35px currentColor;color:#4d7fe6;transform:translateX(-50%) scaleX(0.9350);transform-origin:50% 0;">Invoiced</span>
<span id="t51" class="t" style="left:784px;top:1107.2px;font-size:29px;line-height:29px;-webkit-text-stroke:0.35px currentColor;color:#5d6268;transform:translateX(-50%) scaleX(0.9231);transform-origin:50% 0;">$0.00</span>
<span id="t52" class="t" style="left:1024.5px;top:1106.4px;font-size:30px;line-height:30px;font-weight:bold;color:#5d6268;transform:translateX(-50%) scaleX(0.8630);transform-origin:50% 0;">Hilda Dominguez</span>
<svg class="a" style="left:1248px;top:1110.9px;" width="30" height="20" viewBox="0 0 30 20"><path d="M0.5 10 Q15 -9 29.5 10 Q15 29 0.5 10 Z" fill="#60656b"/><circle cx="15" cy="10" r="5.2" fill="#f9f9f9"/><circle cx="15" cy="10" r="2.6" fill="#60656b"/></svg>
<svg class="a" style="left:1327px;top:1107.4px;" width="31" height="29" viewBox="0 0 31 29"><path d="M15 4.5 H4 Q1.5 4.5 1.5 7 V25.5 Q1.5 27.5 4 27.5 H22 Q24.5 27.5 24.5 25.5 V15" fill="none" stroke="#4e80ea" stroke-width="3"/><path d="M10.5 18.5 L27.5 2" stroke="#4e80ea" stroke-width="5.2" stroke-linecap="round"/><path d="M9 20.5 L11 15.5 L14 18.5 Z" fill="#4e80ea"/></svg>
<svg class="a" style="left:1408px;top:1107.4px;" width="27" height="27" viewBox="0 0 27 27"><path d="M1 5.5 H26" stroke="#d93a2f" stroke-width="3" stroke-linecap="round"/><path d="M9 5 Q9 0.5 13.5 0.5 Q18 0.5 18 5" fill="#d93a2f"/><path d="M4.5 6 V23 Q4.5 26 7.5 26 H19.5 Q22.5 26 22.5 23 V6" fill="none" stroke="#d93a2f" stroke-width="3"/></svg>
<div class="a" style="left:176px;top:1188.2px;width:1299px;height:97px;background:#f9f9f9;border-radius:14px 0 0 14px"></div>
<div class="a" style="left:448px;top:1188.2px;width:1px;height:97px;background:#ececec"></div>
<div class="a" style="left:672px;top:1188.2px;width:1px;height:97px;background:#ececec"></div>
<div class="a" style="left:896px;top:1188.2px;width:1px;height:97px;background:#ececec"></div>
<div class="a" style="left:1152px;top:1188.2px;width:1px;height:97px;background:#ececec"></div>
<span id="t53" class="t" style="left:311.5px;top:1222.2px;font-size:30px;line-height:30px;font-weight:bold;color:#5d6268;transform:translateX(-50%) scaleX(0.9035);transform-origin:50% 0;">EST-NZ000719-25</span>
<span id="t54" class="t" style="left:560px;top:1201.8px;font-size:29px;line-height:29px;-webkit-text-stroke:0.35px currentColor;color:#5d6268;transform:translateX(-50%) scaleX(0.9369);transform-origin:50% 0;">$16,376.09</span>
<span id="t55" class="t" style="left:560.5px;top:1244.1px;font-size:29px;line-height:29px;-webkit-text-stroke:0.35px currentColor;color:#4d7fe6;transform:translateX(-50%) scaleX(0.9350);transform-origin:50% 0;">Invoiced</span>
<span id="t56" class="t" style="left:784px;top:1223.0px;font-size:29px;line-height:29px;-webkit-text-stroke:0.35px currentColor;color:#5d6268;transform:translateX(-50%) scaleX(0.9348);transform-origin:50% 0;">$1,190.37</span>
<span id="t57" class="t" style="left:1024.5px;top:1222.2px;font-size:30px;line-height:30px;font-weight:bold;color:#5d6268;transform:translateX(-50%) scaleX(0.8572);transform-origin:50% 0;">Sara Williams</span>
<svg class="a" style="left:1248px;top:1226.7px;" width="30" height="20" viewBox="0 0 30 20"><path d="M0.5 10 Q15 -9 29.5 10 Q15 29 0.5 10 Z" fill="#60656b"/><circle cx="15" cy="10" r="5.2" fill="#f9f9f9"/><circle cx="15" cy="10" r="2.6" fill="#60656b"/></svg>
<svg class="a" style="left:1327px;top:1223.2px;" width="31" height="29" viewBox="0 0 31 29"><path d="M15 4.5 H4 Q1.5 4.5 1.5 7 V25.5 Q1.5 27.5 4 27.5 H22 Q24.5 27.5 24.5 25.5 V15" fill="none" stroke="#4e80ea" stroke-width="3"/><path d="M10.5 18.5 L27.5 2" stroke="#4e80ea" stroke-width="5.2" stroke-linecap="round"/><path d="M9 20.5 L11 15.5 L14 18.5 Z" fill="#4e80ea"/></svg>
<svg class="a" style="left:1408px;top:1223.2px;" width="27" height="27" viewBox="0 0 27 27"><path d="M1 5.5 H26" stroke="#d93a2f" stroke-width="3" stroke-linecap="round"/><path d="M9 5 Q9 0.5 13.5 0.5 Q18 0.5 18 5" fill="#d93a2f"/><path d="M4.5 6 V23 Q4.5 26 7.5 26 H19.5 Q22.5 26 22.5 23 V6" fill="none" stroke="#d93a2f" stroke-width="3"/></svg>
<div class="a" style="left:176px;top:1304.0px;width:1299px;height:97px;background:#f9f9f9;border-radius:14px 0 0 14px"></div>
<div class="a" style="left:448px;top:1304.0px;width:1px;height:97px;background:#ececec"></div>
<div class="a" style="left:672px;top:1304.0px;width:1px;height:97px;background:#ececec"></div>
<div class="a" style="left:896px;top:1304.0px;width:1px;height:97px;background:#ececec"></div>
<div class="a" style="left:1152px;top:1304.0px;width:1px;height:97px;background:#ececec"></div>
<span id="t58" class="t" style="left:311.5px;top:1338.0px;font-size:30px;line-height:30px;font-weight:bold;color:#5d6268;transform:translateX(-50%) scaleX(0.9035);transform-origin:50% 0;">EST-NZ000717-25</span>
<span id="t59" class="t" style="left:560px;top:1317.6px;font-size:29px;line-height:29px;-webkit-text-stroke:0.35px currentColor;color:#5d6268;transform:translateX(-50%) scaleX(0.9270);transform-origin:50% 0;">$3,783.62</span>
<span id="t60" class="t" style="left:560.5px;top:1359.9px;font-size:29px;line-height:29px;-webkit-text-stroke:0.35px currentColor;color:#4d7fe6;transform:translateX(-50%) scaleX(0.9350);transform-origin:50% 0;">Invoiced</span>
<span id="t61" class="t" style="left:784px;top:1338.8px;font-size:29px;line-height:29px;-webkit-text-stroke:0.35px currentColor;color:#5d6268;transform:translateX(-50%) scaleX(0.9349);transform-origin:50% 0;">$374.78</span>
<span id="t62" class="t" style="left:1024.5px;top:1338.0px;font-size:30px;line-height:30px;font-weight:bold;color:#5d6268;transform:translateX(-50%) scaleX(0.8250);transform-origin:50% 0;">Test Test</span>
<svg class="a" style="left:1248px;top:1342.5px;" width="30" height="20" viewBox="0 0 30 20"><path d="M0.5 10 Q15 -9 29.5 10 Q15 29 0.5 10 Z" fill="#60656b"/><circle cx="15" cy="10" r="5.2" fill="#f9f9f9"/><circle cx="15" cy="10" r="2.6" fill="#60656b"/></svg>
<svg class="a" style="left:1327px;top:1339.0px;" width="31" height="29" viewBox="0 0 31 29"><path d="M15 4.5 H4 Q1.5 4.5 1.5 7 V25.5 Q1.5 27.5 4 27.5 H22 Q24.5 27.5 24.5 25.5 V15" fill="none" stroke="#4e80ea" stroke-width="3"/><path d="M10.5 18.5 L27.5 2" stroke="#4e80ea" stroke-width="5.2" stroke-linecap="round"/><path d="M9 20.5 L11 15.5 L14 18.5 Z" fill="#4e80ea"/></svg>
<svg class="a" style="left:1408px;top:1339.0px;" width="27" height="27" viewBox="0 0 27 27"><path d="M1 5.5 H26" stroke="#d93a2f" stroke-width="3" stroke-linecap="round"/><path d="M9 5 Q9 0.5 13.5 0.5 Q18 0.5 18 5" fill="#d93a2f"/><path d="M4.5 6 V23 Q4.5 26 7.5 26 H19.5 Q22.5 26 22.5 23 V6" fill="none" stroke="#d93a2f" stroke-width="3"/></svg>
<div class="a" style="left:176px;top:1419.8px;width:1299px;height:97px;background:#f9f9f9;border-radius:14px 0 0 14px"></div>
<div class="a" style="left:448px;top:1419.8px;width:1px;height:97px;background:#ececec"></div>
<div class="a" style="left:672px;top:1419.8px;width:1px;height:97px;background:#ececec"></div>
<div class="a" style="left:896px;top:1419.8px;width:1px;height:97px;background:#ececec"></div>
<div class="a" style="left:1152px;top:1419.8px;width:1px;height:97px;background:#ececec"></div>
<span id="t63" class="t" style="left:311.5px;top:1453.8px;font-size:30px;line-height:30px;font-weight:bold;color:#5d6268;transform:translateX(-50%) scaleX(0.9035);transform-origin:50% 0;">EST-NZ000716-25</span>
<span id="t64" class="t" style="left:560px;top:1433.4px;font-size:29px;line-height:29px;-webkit-text-stroke:0.35px currentColor;color:#5d6268;transform:translateX(-50%) scaleX(0.9369);transform-origin:50% 0;">$15,706.53</span>
<span id="t65" class="t" style="left:560.5px;top:1475.7px;font-size:29px;line-height:29px;-webkit-text-stroke:0.35px currentColor;color:#4d7fe6;transform:translateX(-50%) scaleX(0.9350);transform-origin:50% 0;">Invoiced</span>
<span id="t66" class="t" style="left:784px;top:1454.6px;font-size:29px;line-height:29px;-webkit-text-stroke:0.35px currentColor;color:#5d6268;transform:translateX(-50%) scaleX(0.9379);transform-origin:50% 0;">$1,141.70</span>
<span id="t67" class="t" style="left:1024.5px;top:1453.8px;font-size:30px;line-height:30px;font-weight:bold;color:#5d6268;transform:translateX(-50%) scaleX(0.8572);transform-origin:50% 0;">Sara Williams</span>
<svg class="a" style="left:1248px;top:1458.3px;" width="30" height="20" viewBox="0 0 30 20"><path d="M0.5 10 Q15 -9 29.5 10 Q15 29 0.5 10 Z" fill="#60656b"/><circle cx="15" cy="10" r="5.2" fill="#f9f9f9"/><circle cx="15" cy="10" r="2.6" fill="#60656b"/></svg>
<svg class="a" style="left:1327px;top:1454.8px;" width="31" height="29" viewBox="0 0 31 29"><path d="M15 4.5 H4 Q1.5 4.5 1.5 7 V25.5 Q1.5 27.5 4 27.5 H22 Q24.5 27.5 24.5 25.5 V15" fill="none" stroke="#4e80ea" stroke-width="3"/><path d="M10.5 18.5 L27.5 2" stroke="#4e80ea" stroke-width="5.2" stroke-linecap="round"/><path d="M9 20.5 L11 15.5 L14 18.5 Z" fill="#4e80ea"/></svg>
<svg class="a" style="left:1408px;top:1454.8px;" width="27" height="27" viewBox="0 0 27 27"><path d="M1 5.5 H26" stroke="#d93a2f" stroke-width="3" stroke-linecap="round"/><path d="M9 5 Q9 0.5 13.5 0.5 Q18 0.5 18 5" fill="#d93a2f"/><path d="M4.5 6 V23 Q4.5 26 7.5 26 H19.5 Q22.5 26 22.5 23 V6" fill="none" stroke="#d93a2f" stroke-width="3"/></svg>
<div class="a" style="left:1214px;top:712px;width:100px;height:115px;border:10px solid #e63d22"></div>
<svg class="a" style="left:118px;top:794px;" width="190" height="50" viewBox="0 0 190 50"><path d="M0 24 L50 0 L50 17 L188 21 L188 31 L50 30 L50 48 Z" fill="#e63d22"/></svg>
<div class="a" style="left:1534px;top:471px;width:1359px;height:1100px;background:#fff;border:1.5px solid #dadada;border-radius:22px"></div>
<span id="t68" class="t" style="left:1564px;top:502.6px;font-size:30px;line-height:30px;font-weight:bold;color:#5d6268;transform:scaleX(0.9035);transform-origin:0 0;">EST-NZ000722-25</span>
<div class="a" style="left:1807px;top:499px;width:77px;height:39px;background:#f1f1f2;border:1.5px solid #c9cbce;border-radius:20px"></div>
<span id="t69" class="t" style="left:1845px;top:507.4px;font-size:22px;line-height:22px;font-weight:bold;color:#a3a7ab;transform:translateX(-50%) scaleX(0.8959);transform-origin:50% 0;">Draft</span>
<span id="t70" class="t" style="left:1564.5px;top:547.8px;font-size:25px;line-height:25px;-webkit-text-stroke:0.35px currentColor;color:#5d6268;transform:scaleX(0.9559);transform-origin:0 0;">Kitchen Remodel</span>
<div class="a" style="left:1564px;top:685px;width:1299px;height:1.5px;background:#e6e6e6"></div>
<div class="a" style="left:1564px;top:681px;width:164px;height:5px;background:#d93a2f"></div>
<span id="t71" class="t" style="left:1594px;top:634.4px;font-size:29px;line-height:29px;-webkit-text-stroke:0.35px currentColor;color:#d93a2f;transform:scaleX(0.9218);transform-origin:0 0;">Estimate</span>
<span id="t72" class="t" style="left:1772px;top:634.4px;font-size:29px;line-height:29px;-webkit-text-stroke:0.35px currentColor;color:#5d6268;transform:scaleX(0.9519);transform-origin:0 0;">Materials</span>
<div class="a" style="left:1898px;top:633px;width:34px;height:33px;background:#d1d2d4;border-radius:50%"></div>
<span id="t73" class="t" style="left:1915px;top:638.9px;font-size:22px;line-height:22px;font-weight:bold;color:#5d6268;transform:translateX(-50%) ;transform-origin:50% 0;">7</span>
<span id="t74" class="t" style="left:2004px;top:634.4px;font-size:29px;line-height:29px;-webkit-text-stroke:0.35px currentColor;color:#5d6268;transform:scaleX(0.8632);transform-origin:0 0;">Tasks</span>
<span id="t75" class="t" style="left:2141px;top:634.4px;font-size:29px;line-height:29px;-webkit-text-stroke:0.35px currentColor;color:#5d6268;transform:scaleX(0.9375);transform-origin:0 0;">Documents</span>
<span id="t76" class="t" style="left:2779px;top:634.4px;font-size:29px;line-height:29px;-webkit-text-stroke:0.35px currentColor;color:#5d6268;transform:translateX(-100%) ;transform-origin:100% 0;">s</span>
<svg class="a" style="left:2835px;top:634px;" width="20" height="32" viewBox="0 0 20 32"><path d="M3 2 L17 16 L3 30" fill="none" stroke="#4e80ea" stroke-width="2.6" stroke-linecap="round"/></svg>
<div class="a" style="left:2333px;top:488px;width:200px;height:98px;border:1.5px solid #efefef;border-right:none;border-radius:16px 0 0 16px"></div>
<div class="a" style="left:2347px;top:502px;width:67px;height:69px;background:#f8f8f8;border-radius:14px"></div>
<svg class="a" style="left:2366px;top:521px;" width="30" height="30" viewBox="0 0 30 30"><path d="M2 28 L3.5 20.5 L20 4 L26 10 L9.5 26.5 Z" fill="#3d4248"/><path d="M22 2 Q24 0 26 2 L28 4 Q30 6 28 8 L26.5 9.5 L20.5 3.5 Z" fill="#3d4248"/></svg>
<div class="a" style="left:2421px;top:502px;width:95px;height:69px;background:#f8f8f8;border-radius:14px"></div>
<svg class="a" style="left:2437px;top:520px;" width="36" height="33" viewBox="0 0 36 33"><rect x="2" y="10" width="30" height="21.5" rx="1.5" fill="none" stroke="#3d4248" stroke-width="3"/><path d="M3 11 L17 22 L31 11" fill="none" stroke="#3d4248" stroke-width="3"/><path d="M11 7 L17 1 L23 7 Z" fill="#3d4248"/></svg>
<svg class="a" style="left:2489px;top:532px;" width="19" height="12" viewBox="0 0 19 12"><path d="M2 2 L9.5 9.5 L17 2" fill="none" stroke="#3d4248" stroke-width="3" stroke-linecap="round" stroke-linejoin="round"/></svg>
<div class="a" style="left:2796px;top:504px;width:67px;height:66px;background:#f8f8f8;border-radius:14px"></div>
<svg class="a" style="left:2816px;top:524px;" width="28" height="28" viewBox="0 0 28 28"><path d="M26 2 L17 11 M17 4 V11 H24 M2 26 L11 17 M4 17 H11 V24" fill="none" stroke="#3d4248" stroke-width="3" stroke-linecap="round" stroke-linejoin="round"/></svg>
<div class="a" style="left:1564px;top:716px;width:627px;height:197px;border:1.5px solid #dedede;border-radius:14px"></div>
<span id="t77" class="t" style="left:1580px;top:741.4px;font-size:22px;line-height:22px;-webkit-text-stroke:0.35px currentColor;color:#a3a7ab;transform:scaleX(1.1055);transform-origin:0 0;">Billed To</span>
<span id="t78" class="t" style="left:1580px;top:777.4px;font-size:29px;line-height:29px;font-weight:bold;color:#3e4246;transform:scaleX(0.8957);transform-origin:0 0;">Hilda Dominguez</span>
<span id="t79" class="t" style="left:1580px;top:822.1px;font-size:27px;line-height:27px;-webkit-text-stroke:0.35px currentColor;color:#5d6268;transform:scaleX(0.9959);transform-origin:0 0;">770 Broadway Manhattan, New York, New York,</span>
<span id="t80" class="t" style="left:1580px;top:865.1px;font-size:27px;line-height:27px;-webkit-text-stroke:0.35px currentColor;color:#5d6268;transform:scaleX(0.9640);transform-origin:0 0;">10003, US</span>
<div class="a" style="left:2236px;top:716px;width:627px;height:197px;border:1.5px solid #dedede;border-radius:14px"></div>
<span id="t81" class="t" style="left:2251px;top:740.4px;font-size:22px;line-height:22px;-webkit-text-stroke:0.35px currentColor;color:#a3a7ab;transform:scaleX(0.9310);transform-origin:0 0;">Service Address</span>
<span id="t82" class="t" style="left:2253px;top:786.1px;font-size:27px;line-height:27px;-webkit-text-stroke:0.35px currentColor;color:#5d6268;transform:scaleX(0.9977);transform-origin:0 0;">770 Broadway Manhattan, New York, New York,</span>
<span id="t83" class="t" style="left:2253px;top:829.1px;font-size:27px;line-height:27px;-webkit-text-stroke:0.35px currentColor;color:#5d6268;transform:scaleX(0.9640);transform-origin:0 0;">10003, US</span>
<div class="a" style="left:1564px;top:961px;width:1299px;height:72px;background:#676b72;border-radius:14px"></div>
<div class="a" style="left:1884px;top:961px;width:1px;height:72px;background:#82868c"></div>
<div class="a" style="left:2205px;top:961px;width:1px;height:72px;background:#82868c"></div>
<div class="a" style="left:2525px;top:961px;width:1px;height:72px;background:#82868c"></div>
<span id="t84" class="t" style="left:1724px;top:982.4px;font-size:29px;line-height:29px;-webkit-text-stroke:0.35px currentColor;color:#fff;transform:translateX(-50%) scaleX(0.9388);transform-origin:50% 0;">Estimate Date</span>
<span id="t85" class="t" style="left:2044.5px;top:982.4px;font-size:29px;line-height:29px;-webkit-text-stroke:0.35px currentColor;color:#fff;transform:translateX(-50%) scaleX(0.9692);transform-origin:50% 0;">Expiration</span>
<span id="t86" class="t" style="left:2365px;top:982.4px;font-size:29px;line-height:29px;-webkit-text-stroke:0.35px currentColor;color:#fff;transform:translateX(-50%) scaleX(0.9650);transform-origin:50% 0;">Created By</span>
<span id="t87" class="t" style="left:2776px;top:982.4px;font-size:29px;line-height:29px;-webkit-text-stroke:0.35px currentColor;color:#fff;transform:translateX(-100%) ;transform-origin:100% 0;">o</span>
<div class="a" style="left:1884px;top:1051px;width:1px;height:83px;background:#ebebeb"></div>
<div class="a" style="left:2205px;top:1051px;width:1px;height:83px;background:#ebebeb"></div>
<div class="a" style="left:2525px;top:1051px;width:1px;height:83px;background:#ebebeb"></div>
<div class="a" style="left:1564px;top:1133px;width:1299px;height:1.5px;background:#e8e8e8"></div>
<span id="t88" class="t" style="left:1724px;top:1077.4px;font-size:29px;line-height:29px;-webkit-text-stroke:0.35px currentColor;color:#5d6268;transform:translateX(-50%) scaleX(0.9132);transform-origin:50% 0;">Dec. 16th, 2025</span>
<span id="t89" class="t" style="left:2044.5px;top:1077.4px;font-size:29px;line-height:29px;-webkit-text-stroke:0.35px currentColor;color:#5d6268;transform:translateX(-50%) scaleX(0.9062);transform-origin:50% 0;">Dec. 23rd, 2025</span>
<svg class="a" style="left:2220px;top:1065px;" width="54" height="56" viewBox="0 0 54 56"><defs><clipPath id="av2"><circle cx="27" cy="27" r="27"/></clipPath></defs><circle cx="27" cy="27" r="27" fill="#dc3226"/><g clip-path="url(#av2)"><ellipse cx="27" cy="54" rx="26" ry="17" fill="#f3f3f3"/></g><path d="M13 8 L26 4 L30 8 Q38 14 38 30 Q40 44 42 50 L32 48 Q27 52 22 48 L12 52 Q16 40 14 30 Q12 16 13 8 Z" fill="#151515" stroke="#fff" stroke-width="1"/><ellipse cx="24.5" cy="24" rx="8.5" ry="11" fill="#d6d6d6"/><path d="M19 30 Q24.5 34 30 30" stroke="#555" stroke-width="1.5" fill="none"/></svg>
<span id="t90" class="t" style="left:2290px;top:1076.9px;font-size:29px;line-height:29px;-webkit-text-stroke:0.35px currentColor;color:#5d6268;">Gupta</span>
<div class="a" style="left:1564px;top:1182px;width:1299px;height:400px;border:1.5px solid #dedede;border-radius:0"></div>
<div class="a" style="left:1579px;top:1202px;width:1269px;height:72px;background:#676b72;border-radius:14px"></div>
<div class="a" style="left:2086px;top:1202px;width:1px;height:72px;background:#82868c"></div>
<div class="a" style="left:2276px;top:1202px;width:1px;height:72px;background:#82868c"></div>
<div class="a" style="left:2466px;top:1202px;width:1px;height:72px;background:#82868c"></div>
<div class="a" style="left:2656px;top:1202px;width:1px;height:72px;background:#82868c"></div>
<span id="t91" class="t" style="left:1832.5px;top:1223.0px;font-size:30px;line-height:30px;font-weight:bold;color:#fff;transform:translateX(-50%) scaleX(0.8791);transform-origin:50% 0;">[3] Line Items</span>
<span id="t92" class="t" style="left:2181px;top:1223.1px;font-size:29px;line-height:29px;-webkit-text-stroke:0.35px currentColor;color:#fff;transform:translateX(-50%) scaleX(0.8814);transform-origin:50% 0;">Rate</span>
<span id="t93" class="t" style="left:2371.4px;top:1223.1px;font-size:29px;line-height:29px;-webkit-text-stroke:0.35px currentColor;color:#fff;transform:translateX(-50%) scaleX(0.8916);transform-origin:50% 0;">Qty.</span>
<span id="t94" class="t" style="left:2562px;top:1223.1px;font-size:29px;line-height:29px;-webkit-text-stroke:0.35px currentColor;color:#fff;transform:translateX(-50%) scaleX(0.9519);transform-origin:50% 0;">Materials</span>
<span id="t95" class="t" style="left:2752.4px;top:1223.1px;font-size:29px;line-height:29px;-webkit-text-stroke:0.35px currentColor;color:#fff;transform:translateX(-50%) scaleX(0.9630);transform-origin:50% 0;">Total</span>
<div class="a" style="left:1579px;top:1292px;width:1269px;height:124px;background:#fff;border:1.5px solid #ededed;border-radius:14px"></div>
<div class="a" style="left:2086px;top:1305px;width:1px;height:98px;background:#e6e6e6"></div>
<div class="a" style="left:2276px;top:1305px;width:1px;height:98px;background:#e6e6e6"></div>
<div class="a" style="left:2466px;top:1305px;width:1px;height:98px;background:#e6e6e6"></div>
<div class="a" style="left:2656px;top:1305px;width:1px;height:98px;background:#e6e6e6"></div>
<span id="t96" class="t" style="left:1595px;top:1310.4px;font-size:29px;line-height:29px;font-weight:bold;color:#5d6268;transform:scaleX(0.9062);transform-origin:0 0;">Drywall Finishing (3)</span>
<span id="t97" class="t" style="left:1595px;top:1351.6px;font-size:21.5px;line-height:21.5px;-webkit-text-stroke:0.35px currentColor;color:#5d6268;transform:scaleX(0.9853);transform-origin:0 0;">Apply joint compound to the joints and</span>
<span id="t98" class="t" style="left:1595px;top:1377.4px;font-size:21.5px;line-height:21.5px;-webkit-text-stroke:0.35px currentColor;color:#5d6268;transform:scaleX(0.9693);transform-origin:0 0;">screw indentations on the drywall.&nbsp; ... <u>more</u></span>
<svg class="a" style="left:2026px;top:1320px;" width="26" height="26" viewBox="0 0 26 26"><path d="M9 2.7 H23.5 V16.5 M2 10.3 H15.7 V23.6" fill="none" stroke="#4a7ae6" stroke-width="2.7" stroke-linecap="round" stroke-linejoin="round"/></svg>
<span id="t99" class="t" style="left:2181.8px;top:1342.0px;font-size:26px;line-height:26px;-webkit-text-stroke:0.35px currentColor;color:#5d6268;transform:translateX(-50%) scaleX(0.9053);transform-origin:50% 0;">$90.00</span>
<span id="t100" class="t" style="left:2372.2px;top:1342.0px;font-size:26px;line-height:26px;-webkit-text-stroke:0.35px currentColor;color:#5d6268;transform:translateX(-50%) scaleX(0.8972);transform-origin:50% 0;">0.1 Feet</span>
<span id="t101" class="t" style="left:2562.2px;top:1342.0px;font-size:26px;line-height:26px;-webkit-text-stroke:0.35px currentColor;color:#5d6268;transform:translateX(-50%) scaleX(0.8451);transform-origin:50% 0;">$7.86</span>
<span id="t102" class="t" style="left:2752.2px;top:1342.0px;font-size:26px;line-height:26px;font-weight:bold;color:#3e4246;transform:translateX(-50%) scaleX(0.9556);transform-origin:50% 0;">$19.22</span>
<div class="a" style="left:1579px;top:1435px;width:1269px;height:124px;background:#fff;border:1.5px solid #ededed;border-radius:14px"></div>
<div class="a" style="left:2086px;top:1448px;width:1px;height:98px;background:#e6e6e6"></div>
<div class="a" style="left:2276px;top:1448px;width:1px;height:98px;background:#e6e6e6"></div>
<div class="a" style="left:2466px;top:1448px;width:1px;height:98px;background:#e6e6e6"></div>
<div class="a" style="left:2656px;top:1448px;width:1px;height:98px;background:#e6e6e6"></div>
<span id="t103" class="t" style="left:1595px;top:1453.4px;font-size:29px;line-height:29px;font-weight:bold;color:#5d6268;transform:scaleX(0.8936);transform-origin:0 0;">Man hour labour</span>
<span id="t104" class="t" style="left:2182px;top:1459.0px;font-size:26px;line-height:26px;-webkit-text-stroke:0.35px currentColor;color:#5d6268;transform:translateX(-50%) scaleX(0.9150);transform-origin:50% 0;">$135.00</span>
<span id="t105" class="t" style="left:2372px;top:1459.0px;font-size:26px;line-height:26px;-webkit-text-stroke:0.35px currentColor;color:#5d6268;transform:translateX(-50%) scaleX(0.8631);transform-origin:50% 0;">1 Per Piece</span>
<span id="t106" class="t" style="left:2562.5px;top:1459.0px;font-size:26px;line-height:26px;-webkit-text-stroke:0.35px currentColor;color:#5d6268;transform:translateX(-50%) ;transform-origin:50% 0;">~</span>
<span id="t107" class="t" style="left:2752.6px;top:1459.0px;font-size:26px;line-height:26px;font-weight:bold;color:#3e4246;transform:translateX(-50%) scaleX(0.9576);transform-origin:50% 0;">$135.00</span>
<div class="a" style="left:2315px;top:576px;width:450px;height:605px;background:linear-gradient(180deg,#f4f4f4 0%,#f2f2f2 40%,#e5e5e6 68%,#eeeeee 85%,#f3f3f3 100%);border:1.5px solid #d4d4d4;border-radius:14px;box-shadow:0 4px 14px rgba(0,0,0,.08);overflow:hidden"></div>
<div class="a" style="left:2753px;top:578px;width:11px;height:490px;background:#e9e9e9;border-radius:6px"></div>
<span id="t108" class="t" style="left:2392px;top:617.3px;font-size:28px;line-height:28px;-webkit-text-stroke:0.35px currentColor;color:#3d4248;transform:scaleX(0.9570);transform-origin:0 0;">Preview Estimate</span>
<span id="t109" class="t" style="left:2392px;top:697.3px;font-size:28px;line-height:28px;-webkit-text-stroke:0.35px currentColor;color:#3d4248;transform:scaleX(0.9505);transform-origin:0 0;">Download PDF</span>
<span id="t110" class="t" style="left:2392px;top:777.3px;font-size:28px;line-height:28px;-webkit-text-stroke:0.35px currentColor;color:#3d4248;transform:scaleX(0.9667);transform-origin:0 0;">Sign Contract</span>
<span id="t111" class="t" style="left:2392px;top:856.3px;font-size:28px;line-height:28px;-webkit-text-stroke:0.35px currentColor;color:#3d4248;transform:scaleX(0.9613);transform-origin:0 0;">Generate Invoice</span>
<span id="t112" class="t" style="left:2392px;top:934.3px;font-size:28px;line-height:28px;-webkit-text-stroke:0.35px currentColor;color:#3d4248;transform:scaleX(0.9902);transform-origin:0 0;">Send Financing Application</span>
<span id="t113" class="t" style="left:2392px;top:1013.3px;font-size:28px;line-height:28px;-webkit-text-stroke:0.35px currentColor;color:#3d4248;transform:scaleX(0.9490);transform-origin:0 0;">Generate Work Order</span>
<span id="t114" class="t" style="left:2392px;top:1091.3px;font-size:28px;line-height:28px;-webkit-text-stroke:0.35px currentColor;color:#3d4248;transform:scaleX(0.9636);transform-origin:0 0;">Update Status</span>
<svg class="a" style="left:2342px;top:620px;" width="32" height="22" viewBox="0 0 32 22"><path d="M0.5 11 Q16 -9 31.5 11 Q16 31 0.5 11 Z" fill="#3d4248"/><circle cx="16" cy="11" r="5.5" fill="#f4f4f4"/><circle cx="16" cy="11" r="2.8" fill="#3d4248"/></svg>
<svg class="a" style="left:2342px;top:698px;" width="34" height="26" viewBox="0 0 34 26"><path d="M9 24 H6 A5.5 5.5 0 0 1 5 13 A9.5 9.5 0 0 1 23 9 A7.5 7.5 0 0 1 28 24 H25" fill="none" stroke="#3d4248" stroke-width="2.8" stroke-linecap="round" stroke-linejoin="round"/><path d="M17 9 V22 M12 17 L17 22 L22 17" fill="none" stroke="#3d4248" stroke-width="2.8" stroke-linecap="round" stroke-linejoin="round"/></svg>
<svg class="a" style="left:2342px;top:775px;" width="34" height="30" viewBox="0 0 34 30"><path d="M22 28 H3 V2 H17 L22 7" fill="none" stroke="#3d4248" stroke-width="2.8" stroke-linejoin="round"/><path d="M6 23 L9 17 L11 22 L14 18" fill="none" stroke="#3d4248" stroke-width="2"/><path d="M15 22 L17 16 L29 4 L33 8 L21 20 Z" fill="#3d4248"/></svg>
<svg class="a" style="left:2346px;top:850px;" width="26" height="35" viewBox="0 0 26 35"><path d="M2 2 H17 L24 9 V33 H2 Z" fill="none" stroke="#3d4248" stroke-width="2.2" stroke-linejoin="round"/><path d="M17 2 V9 H24" fill="#3d4248"/><path d="M8 4 V12 M4 8 H12" stroke="#3d4248" stroke-width="2"/><text x="14" y="29" font-size="15" text-anchor="middle" fill="#3d4248" font-family="Liberation Sans">$</text></svg>
<svg class="a" style="left:2342px;top:937px;" width="34" height="23" viewBox="0 0 34 23"><rect x="1.5" y="1.5" width="31" height="20" rx="1.5" fill="none" stroke="#3d4248" stroke-width="2.8"/><path d="M2 3 L17 14 L32 3" fill="none" stroke="#3d4248" stroke-width="2.8"/></svg>
<svg class="a" style="left:2345px;top:1012px;" width="31" height="32" viewBox="0 0 31 32"><path d="M18 6 H20 V3 A2 2 0 0 0 12 3 V6 H5 Q3 6 3 8 V28 Q3 30 5 30 H15" fill="none" stroke="#3d4248" stroke-width="2.6"/><path d="M14 14 H24 L30 20 V31 H14 Z" fill="none" stroke="#3d4248" stroke-width="2.6" stroke-linejoin="round"/><path d="M22 8 V14" stroke="#3d4248" stroke-width="2.6"/></svg>
<svg class="a" style="left:2341px;top:1095px;" width="35" height="35" viewBox="0 0 35 35"><circle cx="17.5" cy="17.5" r="7.5" fill="#3d4248"/><path d="M5 9 A15 15 0 0 1 30 9 M30 26 A15 15 0 0 1 5 26" fill="none" stroke="#3d4248" stroke-width="3.5" stroke-linecap="round"/></svg>
<div class="a" style="left:2315px;top:1160px;width:450px;height:21px;overflow:hidden">
<svg style="left:27px;top:12px" width="30" height="30"><path d="M2 30 V4 Q2 2 4 2 H18" fill="none" stroke="#3d4248" stroke-width="2.8"/><rect x="8" y="8" width="18" height="22" rx="2" fill="none" stroke="#3d4248" stroke-width="2.8"/></svg>
<span class="t" style="left:77px;top:10px;font-size:28px;line-height:28px;color:#3d4248;transform:scaleX(0.92);transform-origin:0 0">Duplicate Estimate</span></div>
<div class="a" style="left:2325px;top:820px;width:324px;height:92px;border:10px solid #e63d22"></div>
<div class="a" style="left:2520px;top:486px;width:262px;height:103px;background:#fff;border:10px solid #e63d22"></div>
<div class="a" style="left:2539px;top:502px;width:228px;height:70px;background:#4673db;border-radius:13px"></div>
<span id="t115" class="t" style="left:2562.3px;top:524.2px;font-size:26.5px;line-height:26.5px;-webkit-text-stroke:0.35px currentColor;color:#fff;transform:scaleX(0.8982);transform-origin:0 0;">More Actions</span>
<svg class="a" style="left:2716px;top:532px;" width="19" height="12" viewBox="0 0 19 12"><path d="M2 2 L9.5 9.5 L17 2" fill="none" stroke="#fff" stroke-width="3" stroke-linecap="round" stroke-linejoin="round"/></svg>
<div class="a" style="left:2810px;top:1388px;width:86px;height:86px;background:#cc2a1f;border-radius:50%;box-shadow:0 2px 6px rgba(0,0,0,.15)"></div>
<svg class="a" style="left:2833px;top:1410px;" width="40" height="44" viewBox="0 0 40 44"><path d="M5 0 H35 Q39 0 39 4 V43 L30 36 H5 Q1 36 1 32 V4 Q1 0 5 0 Z" fill="#fff"/><path d="M8 29 Q20 36 32 29" fill="none" stroke="#cc2a1f" stroke-width="2.5" stroke-linecap="round"/></svg>
<div class="a" style="left:120px;top:1475px;width:2786px;height:11px;background:linear-gradient(180deg,#ececec,#f3f3f3)"></div>
</body></html>
